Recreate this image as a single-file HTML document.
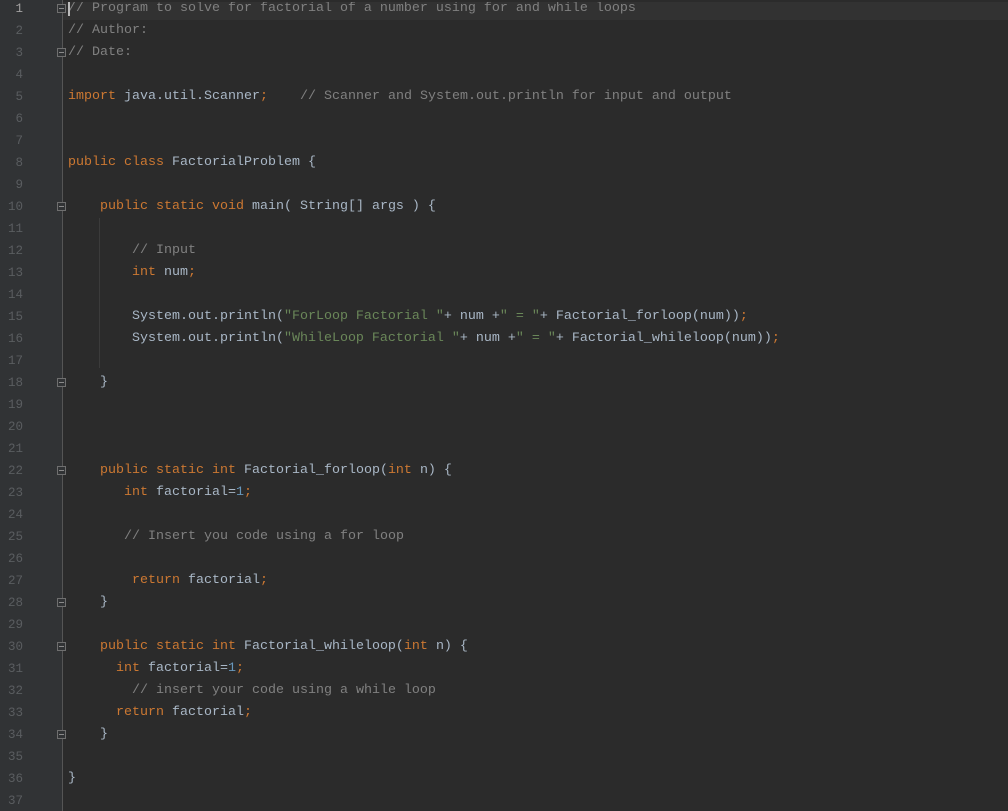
<!DOCTYPE html>
<html style="overflow:hidden;width:1008px;height:811px"><head><meta charset="utf-8"><style>
body{margin:0;width:1008px;height:811px;background:#2b2b2b;overflow:hidden;position:relative;font-family:"Liberation Mono",monospace;font-size:13.33px}
.g{position:absolute;left:0;top:0;width:62px;height:811px;background:#313335}
.sep{position:absolute;left:62px;top:0;width:1px;height:811px;background:#555}
.w{position:absolute;left:0;top:2px;width:1008px;height:809px;overflow:hidden}
.hl{position:absolute;left:63px;top:-4px;width:945px;height:22px;background:#323232}
.n{position:absolute;left:0;width:23px;text-align:right;color:#5a5d60;line-height:22px;font-size:12.5px}
.l{position:absolute;left:68px;line-height:22px;white-space:pre;color:#a9b7c6}
.k{color:#cc7832}.c{color:#808080}.s{color:#6a8759}.d{color:#6897bb}
.ig{position:absolute;width:1px;background:#3b3b3b}
.f{position:absolute;left:57px;width:9px;height:9px;border:1px solid #6f6f6f;box-sizing:border-box;background:#313335}
.f:after{content:"";position:absolute;left:1px;top:3px;width:5px;height:1px;background:#8a8a8a}
</style></head><body>
<div class="g"></div><div class="sep"></div>
<div class="w">
<div class="hl"></div>
<div class="ig" style="left:99px;top:216px;height:150px"></div>
<div id="nums"></div>
<div class="l" style="top:-4px"><span class="c">// Program to solve for factorial of a number using for and while loops</span></div>
<div style="position:absolute;left:68px;top:-2px;width:2px;height:16px;background:#bbb"></div>
<div class="l" style="top:18px"><span class="c">// Author:</span></div>
<div class="l" style="top:40px"><span class="c">// Date:</span></div>
<div class="l" style="top:84px"><span class="k">import </span>java.util.Scanner<span class="k">;</span>    <span class="c">// Scanner and System.out.println for input and output</span></div>
<div class="l" style="top:150px"><span class="k">public class </span>FactorialProblem {</div>
<div class="l" style="top:194px">    <span class="k">public static void </span>main( String[] args ) {</div>
<div class="l" style="top:238px">        <span class="c">// Input</span></div>
<div class="l" style="top:260px">        <span class="k">int </span>num<span class="k">;</span></div>
<div class="l" style="top:304px">        System.out.println(<span class="s">"ForLoop Factorial "</span>+ num +<span class="s">" = "</span>+ Factorial_forloop(num))<span class="k">;</span></div>
<div class="l" style="top:326px">        System.out.println(<span class="s">"WhileLoop Factorial "</span>+ num +<span class="s">" = "</span>+ Factorial_whileloop(num))<span class="k">;</span></div>
<div class="l" style="top:370px">    }</div>
<div class="l" style="top:458px">    <span class="k">public static int </span>Factorial_forloop(<span class="k">int </span>n) {</div>
<div class="l" style="top:480px">       <span class="k">int </span>factorial=<span class="d">1</span><span class="k">;</span></div>
<div class="l" style="top:524px">       <span class="c">// Insert you code using a for loop</span></div>
<div class="l" style="top:568px">        <span class="k">return </span>factorial<span class="k">;</span></div>
<div class="l" style="top:590px">    }</div>
<div class="l" style="top:634px">    <span class="k">public static int </span>Factorial_whileloop(<span class="k">int </span>n) {</div>
<div class="l" style="top:656px">      <span class="k">int </span>factorial=<span class="d">1</span><span class="k">;</span></div>
<div class="l" style="top:678px">        <span class="c">// insert your code using a while loop</span></div>
<div class="l" style="top:700px">      <span class="k">return </span>factorial<span class="k">;</span></div>
<div class="l" style="top:722px">    }</div>
<div class="l" style="top:766px">}</div>
<div class="f" style="top:2px"></div><div class="f" style="top:46px"></div>
<div class="f" style="top:200px"></div><div class="f" style="top:376px"></div>
<div class="f" style="top:464px"></div><div class="f" style="top:596px"></div>
<div class="f" style="top:640px"></div><div class="f" style="top:728px"></div>
</div>
<script>
var h='';for(var i=1;i<=37;i++){h+='<div class="n" style="top:'+(22*(i-1)-4)+'px;'+(i==1?'color:#a4a3a3':'')+'">'+i+'</div>';}
document.getElementById('nums').innerHTML=h;
</script>
</body></html>
